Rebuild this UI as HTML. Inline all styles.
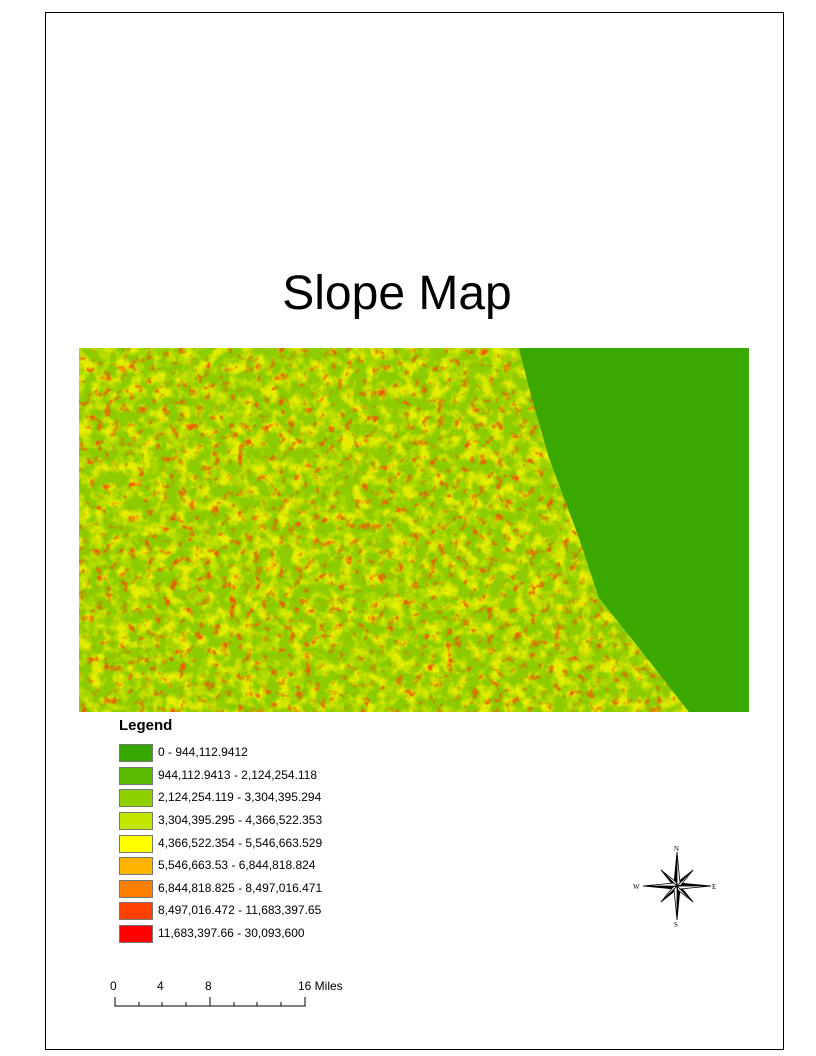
<!DOCTYPE html>
<html><head><style>
body{margin:0;background:#fff;font-family:"Liberation Sans",Arial,sans-serif;}
.pg{position:relative;width:816px;height:1056px;overflow:hidden;background:#fff}
.frame{position:absolute;left:45px;top:12px;width:737px;height:1036px;border:1px solid #000}
.t{position:absolute;left:-11px;width:816px;top:266px;text-align:center;font-size:48px;color:#000}
.sw{position:absolute;left:119px;width:32px;height:16px;border:1px solid #777}
.lt{position:absolute;left:158px;font-size:12px;color:#000}
.s{position:absolute;font-size:12px}
</style></head><body><div class="pg">
<div class="frame"></div>
<div class="t">Slope Map</div>
<svg style="position:absolute;left:79px;top:348px" width="670" height="364">
<defs>
<filter id="n" x="0" y="0" width="100%" height="100%">
<feTurbulence type="fractalNoise" baseFrequency="0.08" numOctaves="4" seed="3" result="t"/>
<feColorMatrix in="t" type="matrix" values="0 0 0 0 0  0 0 0 0 0  0 0 0 0 0  3 0 0 0 -1.2" result="m"/>
<feComposite in="SourceGraphic" in2="m" operator="in"/>
</filter>
<filter id="r" x="0" y="0" width="100%" height="100%">
<feTurbulence type="fractalNoise" baseFrequency="0.12" numOctaves="3" seed="9" result="t"/>
<feColorMatrix in="t" type="matrix" values="0 0 0 0 0  0 0 0 0 0  0 0 0 0 0  4 0 0 0 -2.3" result="m"/>
<feComposite in="SourceGraphic" in2="m" operator="in"/>
</filter>
</defs>
<rect width="670" height="364" fill="#8ccc00"/>
<rect width="670" height="364" fill="#e6ee00" filter="url(#n)"/>
<rect width="670" height="364" fill="#f05a00" filter="url(#r)"/>
<path d="M440 0 L670 0 L670 364 L610 364 L560 300 L520 250 L500 190 L470 110 L450 40 Z" fill="#3aa800"/>
</svg>
<div class="s" style="left:119px;top:717px;font-size:15px;font-weight:bold">Legend</div>
<div class="sw" style="top:744px;background:#38a800"></div><div class="lt" style="top:745px">0 - 944,112.9412</div>
<div class="sw" style="top:767px;background:#5cbd00"></div><div class="lt" style="top:768px">944,112.9413 - 2,124,254.118</div>
<div class="sw" style="top:789px;background:#8fd100"></div><div class="lt" style="top:790px">2,124,254.119 - 3,304,395.294</div>
<div class="sw" style="top:812px;background:#c5e600"></div><div class="lt" style="top:813px">3,304,395.295 - 4,366,522.353</div>
<div class="sw" style="top:835px;background:#ffff00"></div><div class="lt" style="top:836px">4,366,522.354 - 5,546,663.529</div>
<div class="sw" style="top:857px;background:#ffb300"></div><div class="lt" style="top:858px">5,546,663.53 - 6,844,818.824</div>
<div class="sw" style="top:880px;background:#ff8000"></div><div class="lt" style="top:881px">6,844,818.825 - 8,497,016.471</div>
<div class="sw" style="top:902px;background:#ff4000"></div><div class="lt" style="top:903px">8,497,016.472 - 11,683,397.65</div>
<div class="sw" style="top:925px;background:#ff0000"></div><div class="lt" style="top:926px">11,683,397.66 - 30,093,600</div>
<div class="s" style="left:110px;top:979px">0</div>
<div class="s" style="left:157px;top:979px">4</div>
<div class="s" style="left:205px;top:979px">8</div>
<div class="s" style="left:298px;top:979px">16 Miles</div>
<svg style="position:absolute;left:110px;top:995px" width="200" height="15">
<path d="M5 2V11H195V2M29 7V11M52 7V11M76 7V11M100 2V11M124 7V11M147 7V11M171 7V11" stroke="#000" fill="none"/>
</svg>
<svg style="position:absolute;left:630px;top:842px" width="90" height="88">
<g transform="translate(47,44)" stroke="#000" stroke-width="0.8">
<g fill="#000"><path d="M0 0L-3 -3L0 -34Z"/><path d="M0 0L3 3L0 34Z"/><path d="M0 0L-3 3L-34 0Z"/><path d="M0 0L3 -3L34 0Z"/>
<path d="M0 0L-4 -1L-16 -16Z"/><path d="M0 0L4 1L16 16Z"/><path d="M0 0L1 -4L16 -16Z"/><path d="M0 0L-1 4L-16 16Z"/></g>
<g fill="#fff"><path d="M0 0L3 -3L0 -34Z"/><path d="M0 0L-3 3L0 34Z"/><path d="M0 0L-3 -3L-34 0Z"/><path d="M0 0L3 3L34 0Z"/>
<path d="M0 0L-1 -4L-16 -16Z"/><path d="M0 0L1 4L16 16Z"/><path d="M0 0L4 -1L16 -16Z"/><path d="M0 0L-4 1L-16 16Z"/></g>
</g>
<text x="44" y="9" font-size="7" font-family="Liberation Serif">N</text>
<text x="44" y="85" font-size="7" font-family="Liberation Serif">S</text>
<text x="3" y="47" font-size="7" font-family="Liberation Serif">W</text>
<text x="82" y="47" font-size="7" font-family="Liberation Serif">E</text>
</svg>
</div></body></html>
